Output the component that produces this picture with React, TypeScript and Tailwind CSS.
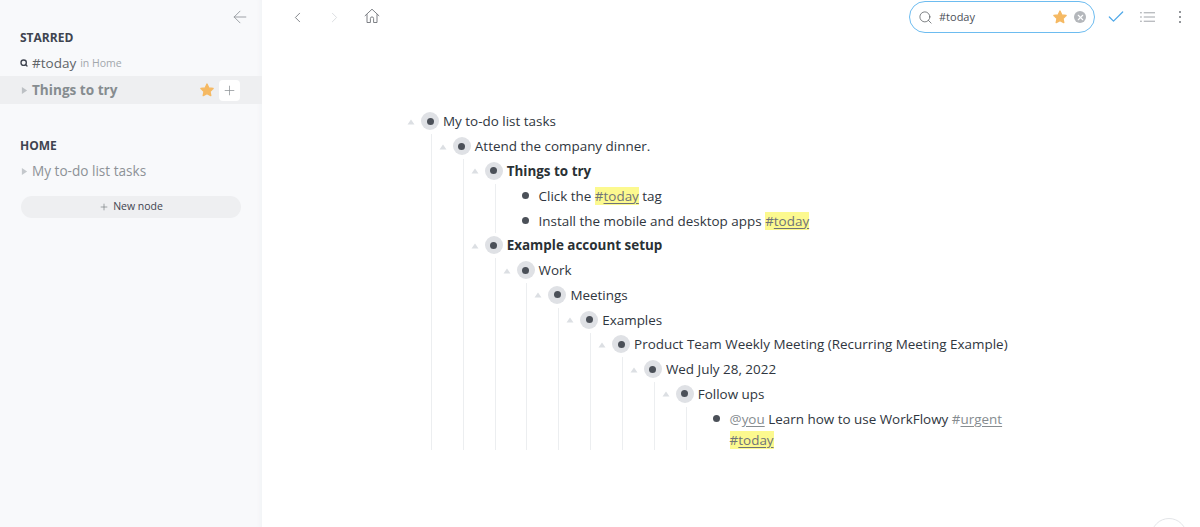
import { ArrowLeft, ChevronLeft, ChevronRight, Plus, Search, Check, X } from 'lucide-react';
import type { ReactNode } from 'react';

type TreeNode = {
  text: ReactNode;
  bold?: boolean;
  children?: TreeNode[];
};

function Tag({ children, today }: { children: string; today?: boolean }) {
  return (
    <span className={today ? 'bg-[#fcf98f] text-[#6f7378]' : 'text-[#868c90]'}>
      {children[0]}
      <span className="underline underline-offset-2 decoration-1">{children.slice(1)}</span>
    </span>
  );
}

const tree: TreeNode = {
  text: 'My to-do list tasks',
  children: [
    {
      text: 'Attend the company dinner.',
      children: [
        {
          text: 'Things to try',
          bold: true,
          children: [
            { text: <>Click the <Tag today>#today</Tag> tag</> },
            { text: <>Install the mobile and desktop apps <Tag today>#today</Tag></> },
          ],
        },
        {
          text: 'Example account setup',
          bold: true,
          children: [
            {
              text: 'Work',
              children: [
                {
                  text: 'Meetings',
                  children: [
                    {
                      text: 'Examples',
                      children: [
                        {
                          text: 'Product Team Weekly Meeting (Recurring Meeting Example)',
                          children: [
                            {
                              text: 'Wed July 28, 2022',
                              children: [
                                {
                                  text: 'Follow ups',
                                  children: [
                                    {
                                      text: (
                                        <>
                                          <Tag>@you</Tag> Learn how to use WorkFlowy <Tag>#urgent</Tag>{' '}
                                          <Tag today>#today</Tag>
                                        </>
                                      ),
                                    },
                                  ],
                                },
                              ],
                            },
                          ],
                        },
                      ],
                    },
                  ],
                },
              ],
            },
          ],
        },
      ],
    },
  ],
};

function Triangle({ className }: { className: string }) {
  return (
    <svg viewBox="0 0 8 8" className={className} fill="currentColor">
      <path d="M1 0l6 4-6 4z" />
    </svg>
  );
}

function Outline({ node }: { node: TreeNode }) {
  const hasKids = !!node.children?.length;
  return (
    <div>
      <div className="flex py-[1.9px]">
        <div className="flex h-[21px] w-[14px] shrink-0 items-center justify-center">
          {hasKids && (
            <svg viewBox="0 0 8 8" className="h-2 w-2 text-[#dcdfe3]" fill="currentColor">
              <path d="M4 1.5l3.5 5h-7z" />
            </svg>
          )}
        </div>
        <div
          className={`ml-[3px] mr-1 mt-[1px] flex h-[18px] w-[18px] shrink-0 items-center justify-center self-start rounded-full ${
            hasKids ? 'bg-[#dfe1e5]' : ''
          }`}
        >
          <span className="h-[7px] w-[7px] rounded-full bg-[#4b5058]" />
        </div>
        <div className={`w-[275px] grow text-[13.45px] leading-[21px] ${node.bold ? 'font-bold text-[#2a3135]' : 'text-[#2f3640]'}`}>
          {node.text}
        </div>
      </div>
      {hasKids && (
        <div className="ml-[26.85px] border-l border-[#eceef0] pl-1">
          {node.children!.map((c, i) => (
            <Outline key={i} node={c} />
          ))}
        </div>
      )}
    </div>
  );
}

function Star({ className }: { className: string }) {
  return (
    <svg viewBox="0 0 24 24" className={className} fill="#f5b963" stroke="#f5b963" strokeWidth="2" strokeLinejoin="round">
      <path d="M12 3l2.8 5.9 6.4.8-4.7 4.4 1.2 6.4L12 17.4l-5.7 3.1 1.2-6.4-4.7-4.4 6.4-.8z" />
    </svg>
  );
}

function Sidebar() {
  return (
    <aside className="flex h-full w-[262px] shrink-0 flex-col bg-[#f8f9fb] shadow-[inset_-6px_0_6px_-6px_#eceef1]">
      <div className="flex h-[29px] shrink-0 items-start justify-end pr-3 pt-[7px]">
        <ArrowLeft size={20} strokeWidth={1} className="text-[#8c9196]" />
      </div>
      <h2 className="mt-[1px] pl-5 text-[12px] font-bold leading-4 text-[#3f4450]">STARRED</h2>
      <div className="mt-[4px] flex h-[26px] items-center pl-5">
        <Search size={8} strokeWidth={4} className="mr-1 text-[#3f4450]" />
        <span className="text-[13.5px] font-medium text-[#5f6469]">#today</span>
        <span className="ml-1 pt-[2px] text-[10.5px] text-[#a2a7ac]">in Home</span>
      </div>
      <div className="flex h-[28px] shrink-0 items-center bg-[#eeeff1] pl-[21px] pr-[22px]">
        <Triangle className="mr-[4px] h-[7px] w-[7px] text-[#bcc0c4]" />
        <span className="flex-1 text-[13.6px] font-bold text-[#868c90]">Things to try</span>
        <Star className="mr-[4px] h-4 w-4" />
        <span className="flex h-[21px] w-[21px] items-center justify-center rounded bg-white">
          <Plus size={15} strokeWidth={1.2} className="text-[#8c9196]" />
        </span>
      </div>
      <h2 className="mt-[34px] pl-5 text-[12px] font-bold leading-4 text-[#3f4450]">HOME</h2>
      <div className="mt-[5px] flex h-[25px] items-center pl-[21px]">
        <Triangle className="mr-[4px] h-[7px] w-[7px] text-[#c4c8cc]" />
        <span className="text-[13.6px] text-[#8d9297]">My to-do list tasks</span>
      </div>
      <button
        type="button"
        className="ml-[21px] mt-[12px] flex h-[22px] w-[220px] items-center justify-center gap-[4px] rounded-full bg-[#eeeff1] text-[10.5px] font-medium text-[#3f4450]"
      >
        <Plus size={10} strokeWidth={1.5} className="text-[#6f7378]" />
        New node
      </button>
    </aside>
  );
}

function Topbar() {
  return (
    <header className="flex h-[34px] items-center">
      <ChevronLeft size={17} strokeWidth={1.2} className="ml-[27px] text-[#6f7378]" />
      <ChevronRight size={17} strokeWidth={1.2} className="ml-5 text-[#d5d8db]" />
      <svg viewBox="0 0 16 16" className="mb-0.5 ml-[21px] h-4 w-4 text-[#6f7378]" fill="none" stroke="currentColor" strokeWidth="0.9">
        <path d="M0.8 8L8 1.2 15.2 8M3 6.2V14.5h3.4v-4a1.6 1.6 0 0 1 3.2 0v4H13V6.2" />
      </svg>
      <div className="ml-auto flex h-8 w-[186px] items-center rounded-full border border-[#6dbcf0] pl-[8px] pr-[8px]">
        <Search size={15} strokeWidth={1.2} className="text-[#55595e]" />
        <span className="ml-[6px] flex-1 text-[11px] text-[#4b5058]">#today</span>
        <Star className="mr-[6px] h-4 w-4" />
        <span className="flex h-3 w-3 items-center justify-center rounded-full bg-[#b4b7bb]">
          <X size={9} strokeWidth={3} className="text-white" />
        </span>
      </div>
      <Check size={20} strokeWidth={1.5} className="ml-[11px] text-[#4fa8e8]" />
      <svg viewBox="0 0 16 12" className="ml-[14px] h-3 w-[15px] text-[#9a9ea3]" stroke="currentColor" strokeWidth="1">
        <path d="M0 1.5h2M4 1.5h12M0 6h2M4 6h12M0 10.5h2M4 10.5h12" />
      </svg>
      <svg viewBox="0 0 4 14" className="ml-[23px] mr-[18px] h-3.5 w-1 text-[#6f7378]" fill="currentColor">
        <circle cx="2" cy="2" r="1" />
        <circle cx="2" cy="7" r="1" />
        <circle cx="2" cy="12" r="1" />
      </svg>
    </header>
  );
}

export default function App() {
  return (
    <div className="relative flex h-[527px] w-[1200px] overflow-hidden bg-white font-['Open_Sans',sans-serif]">
      <Sidebar />
      <main className="flex-1">
        <Topbar />
        <div className="ml-[142px] mt-[75px] h-[341px] w-[620px] overflow-hidden pt-[0.5px]">
          <Outline node={tree} />
        </div>
      </main>
      <span className="absolute left-[1151px] top-[518px] h-9 w-9 rounded-full border border-[#e3e5e8]" />
    </div>
  );
}
